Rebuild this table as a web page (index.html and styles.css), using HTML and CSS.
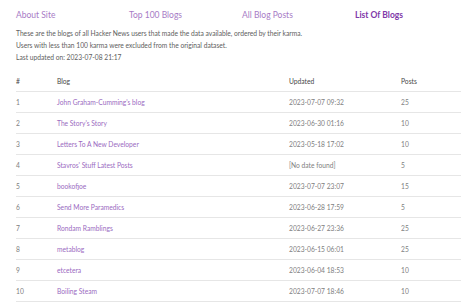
FILE: index.html
```html
<!DOCTYPE html>
<html lang="en">
<head>
    <meta charset="UTF-8">
    <meta name="viewport" content="width=device-width, initial-scale=1.0">
    <title>List Of Blogs</title>
    <link rel="stylesheet" href="styles.css">
</head>
<body>
    <nav class="nav">
        <a href="#">About Site</a>
        <a href="#">Top 100 Blogs</a>
        <a href="#">All Blog Posts</a>
        <a href="#" class="active">List Of Blogs</a>
    </nav>

    <div class="intro">
        <p>These are the blogs of all Hacker News users that made the data available, ordered by their karma.</p>
        <p>Users with less than 100 karma were excluded from the original dataset.</p>
        <p>Last updated on: 2023-07-08 21:17</p>
    </div>

    <table class="blogs">
        <thead>
            <tr><th class="num">#</th><th class="name">Blog</th><th class="date">Updated</th><th>Posts</th></tr>
        </thead>
        <tbody>
            <tr><td>1</td><td><a href="#">John Graham-Cumming's blog</a></td><td>2023-07-07 09:32</td><td>25</td></tr>
            <tr><td>2</td><td><a href="#">The Story's Story</a></td><td>2023-06-30 01:16</td><td>10</td></tr>
            <tr><td>3</td><td><a href="#">Letters To A New Developer</a></td><td>2023-05-18 17:02</td><td>10</td></tr>
            <tr><td>4</td><td><a href="#">Stavros' Stuff Latest Posts</a></td><td>[No date found]</td><td>5</td></tr>
            <tr><td>5</td><td><a href="#">bookofjoe</a></td><td>2023-07-07 23:07</td><td>15</td></tr>
            <tr><td>6</td><td><a href="#">Send More Paramedics</a></td><td>2023-06-28 17:59</td><td>5</td></tr>
            <tr><td>7</td><td><a href="#">Rondam Ramblings</a></td><td>2023-06-27 23:36</td><td>25</td></tr>
            <tr><td>8</td><td><a href="#">metablog</a></td><td>2023-06-15 06:01</td><td>25</td></tr>
            <tr><td>9</td><td><a href="#">etcetera</a></td><td>2023-06-04 18:53</td><td>10</td></tr>
            <tr><td>10</td><td><a href="#">Boiling Steam</a></td><td>2023-07-07 18:46</td><td>10</td></tr>
        </tbody>
    </table>
</body>
</html>
```

FILE: styles.css
```css
body {
    font-family: Lato, "Open Sans", sans-serif;
    margin: 0;
    padding: 9px 16px 0;
    color: #606060;
    background: #fff;
}
a {
    color: #9b59b6;
    text-decoration: none;
}
.nav {
    display: grid;
    grid-template-columns: repeat(4, 113px);
    font-size: 8.5px;
    line-height: 12px;
}
.nav a {
    color: #a77bc6;
}
.nav a.active {
    color: #8038a8;
    font-weight: bold;
}
.intro {
    margin-top: 6px;
    font-size: 6.7px;
    line-height: 12px;
}
.intro p {
    margin: 0;
}
.blogs {
    margin-top: 7px;
    width: 445px;
    border-collapse: collapse;
    font-size: 6.7px;
}
.blogs th {
    text-align: left;
    font-weight: normal;
    color: #484848;
    height: 21px;
    padding: 0;
    border-bottom: 1px solid #e6e6e6;
}
.blogs td {
    height: 20px;
    padding: 0;
    border-bottom: 1px solid #e6e6e6;
    color: #808080;
}
.blogs td a {
    color: #9b6bbf;
}
.blogs .num {
    width: 41px;
}
.blogs .name {
    width: 232px;
}
.blogs .date {
    width: 112px;
}
```
